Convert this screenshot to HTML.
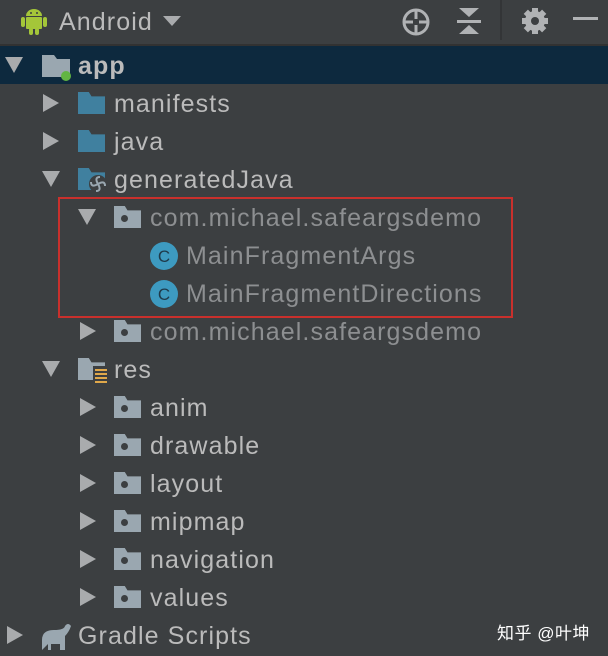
<!DOCTYPE html>
<html><head><style>
body{margin:0;width:608px;height:656px;background:#3c3f41;overflow:hidden;font-family:"Liberation Sans","Noto Sans CJK SC",sans-serif;position:relative}
.a{position:absolute}
.t{position:absolute;font-size:25px;letter-spacing:1.1px;color:#bbbbbb;line-height:38px;height:38px;white-space:nowrap;margin-top:1px}
.g{color:#8d8f91}
.tri{position:absolute;width:0;height:0}
.r{border-top:9px solid transparent;border-bottom:9px solid transparent;border-left:16px solid #a9abad}
.d{border-left:9px solid transparent;border-right:9px solid transparent;border-top:16px solid #a9abad}
.f{position:absolute;width:27px;height:22px}
</style></head><body>
<div class="a" style="left:0;top:0;width:608px;height:44px;background:#3c3f41;border-bottom:2px solid #323232"></div>
<svg class="a" style="left:20px;top:6px" width="28" height="30" viewBox="0 0 28 30"><path d="M6 10a8 7 0 0 1 16 0z" fill="#a4c639"/><rect x="6" y="11" width="16" height="12" rx="1" fill="#a4c639"/><rect x="1" y="11" width="4" height="10" rx="2" fill="#a4c639"/><rect x="23" y="11" width="4" height="10" rx="2" fill="#a4c639"/><rect x="9" y="22" width="4" height="7" rx="2" fill="#a4c639"/><rect x="15" y="22" width="4" height="7" rx="2" fill="#a4c639"/><circle cx="11" cy="7" r="1" fill="#3c3f41"/><circle cx="17" cy="7" r="1" fill="#3c3f41"/></svg>
<div class="t" style="left:59px;top:2px">Android</div>
<div class="tri d" style="left:163px;top:16px;border-left-width:9px;border-right-width:9px;border-top-width:10px"></div>
<svg class="a" style="left:400px;top:6px" width="32" height="32"><circle cx="16" cy="16" r="12" fill="none" stroke="#b0b2b4" stroke-width="3"/><path d="M16 3v10M16 19v10M3 16h10M19 16h10" stroke="#b0b2b4" stroke-width="3"/></svg>
<svg class="a" style="left:455px;top:6px" width="28" height="30"><path d="M4 2h20l-10 9z M4 28h20l-10-9z" fill="#b0b2b4"/><rect x="2" y="14" width="24" height="3" fill="#b0b2b4"/></svg>
<div class="a" style="left:500px;top:0;width:2px;height:40px;background:#333537"></div>
<svg class="a" style="left:520px;top:6px" width="30" height="30" viewBox="0 0 30 30"><g fill="#b0b2b4"><circle cx="15" cy="15" r="10"/><rect x="12" y="2" width="6" height="26"/><rect x="2" y="12" width="26" height="6"/><rect x="12" y="2" width="6" height="26" transform="rotate(45 15 15)"/><rect x="12" y="2" width="6" height="26" transform="rotate(-45 15 15)"/></g><circle cx="15" cy="15" r="4" fill="#3c3f41"/></svg>
<div class="a" style="left:573px;top:17px;width:25px;height:3px;background:#b0b2b4"></div>

<div class="a" style="left:0;top:46px;width:608px;height:38px;background:#0d293e"></div>
<div class="tri d" style="left:5px;top:57px"></div>
<svg class="a" style="left:42px;top:53px" width="30" height="28"><path d="M0 2h12l3 4h13v18H0z" fill="#9aa7b0"/><circle cx="24" cy="23" r="5" fill="#62b543"/></svg>
<div class="t" style="left:78px;top:46px;font-weight:bold">app</div>

<div class="tri r" style="left:43px;top:94px"></div>
<div class="f" style="left:78px;top:92px;background:#40809f;clip-path:polygon(0 0,40% 0,50% 20%,100% 20%,100% 100%,0 100%)"></div>
<div class="t" style="left:114px;top:84px">manifests</div>
<div class="tri r" style="left:43px;top:132px"></div>
<div class="f" style="left:78px;top:130px;background:#40809f;clip-path:polygon(0 0,40% 0,50% 20%,100% 20%,100% 100%,0 100%)"></div>
<div class="t" style="left:114px;top:122px">java</div>
<div class="tri d" style="left:42px;top:171px"></div>
<div class="f" style="left:78px;top:168px;background:#40809f;clip-path:polygon(0 0,40% 0,50% 20%,100% 20%,100% 100%,0 100%)"></div>
<svg class="a" style="left:88px;top:174px" width="20" height="20"><circle cx="10" cy="10" r="9" fill="#3c3f41"/><g stroke="#9aa7b0" stroke-width="2" fill="none"><path d="M10 10Q6 3 12 3M10 10Q17 6 17 12M10 10Q14 17 8 17M10 10Q3 14 3 8"/></g></svg>
<div class="t" style="left:114px;top:160px">generatedJava</div>

<div class="a" style="left:58px;top:197px;width:451px;height:117px;border:2px solid #c9302c"></div>
<div class="tri d" style="left:78px;top:209px"></div>
<div class="f" style="left:114px;top:206px;background:#9aa7b0;clip-path:polygon(0 0,40% 0,50% 20%,100% 20%,100% 100%,0 100%)"></div><div class="a" style="left:121px;top:215px;width:7px;height:7px;border-radius:50%;background:#3c3f41"></div>
<div class="t g" style="left:150px;top:198px">com.michael.safeargsdemo</div>
<svg class="a" style="left:150px;top:242px" width="28" height="28"><circle cx="14" cy="14" r="14" fill="#3d9ac0"/><text x="14" y="20" font-size="17" text-anchor="middle" fill="#1f3a4a" font-family="Liberation Sans">C</text></svg>
<div class="t g" style="left:186px;top:236px">MainFragmentArgs</div>
<svg class="a" style="left:150px;top:280px" width="28" height="28"><circle cx="14" cy="14" r="14" fill="#3d9ac0"/><text x="14" y="20" font-size="17" text-anchor="middle" fill="#1f3a4a" font-family="Liberation Sans">C</text></svg>
<div class="t g" style="left:186px;top:274px">MainFragmentDirections</div>

<div class="tri r" style="left:80px;top:322px"></div>
<div class="f" style="left:114px;top:320px;background:#9aa7b0;clip-path:polygon(0 0,40% 0,50% 20%,100% 20%,100% 100%,0 100%)"></div><div class="a" style="left:121px;top:329px;width:7px;height:7px;border-radius:50%;background:#3c3f41"></div>
<div class="t g" style="left:150px;top:312px">com.michael.safeargsdemo</div>

<div class="tri d" style="left:42px;top:361px"></div>
<div class="f" style="left:78px;top:358px;background:#9aa7b0;clip-path:polygon(0 0,40% 0,50% 20%,100% 20%,100% 100%,0 100%)"></div>
<svg class="a" style="left:93px;top:366px" width="16" height="20"><rect width="16" height="20" fill="#3c3f41"/><g fill="#e0a84a"><rect x="2" y="3" width="12" height="2"/><rect x="2" y="7" width="12" height="2"/><rect x="2" y="11" width="12" height="2"/><rect x="2" y="15" width="12" height="2"/></g></svg>
<div class="t" style="left:114px;top:350px">res</div>

<div class="tri r" style="left:80px;top:398px"></div><div class="f" style="left:114px;top:396px;background:#9aa7b0;clip-path:polygon(0 0,40% 0,50% 20%,100% 20%,100% 100%,0 100%)"></div><div class="a" style="left:121px;top:405px;width:7px;height:7px;border-radius:50%;background:#3c3f41"></div><div class="t" style="left:150px;top:388px">anim</div>
<div class="tri r" style="left:80px;top:436px"></div><div class="f" style="left:114px;top:434px;background:#9aa7b0;clip-path:polygon(0 0,40% 0,50% 20%,100% 20%,100% 100%,0 100%)"></div><div class="a" style="left:121px;top:443px;width:7px;height:7px;border-radius:50%;background:#3c3f41"></div><div class="t" style="left:150px;top:426px">drawable</div>
<div class="tri r" style="left:80px;top:474px"></div><div class="f" style="left:114px;top:472px;background:#9aa7b0;clip-path:polygon(0 0,40% 0,50% 20%,100% 20%,100% 100%,0 100%)"></div><div class="a" style="left:121px;top:481px;width:7px;height:7px;border-radius:50%;background:#3c3f41"></div><div class="t" style="left:150px;top:464px">layout</div>
<div class="tri r" style="left:80px;top:512px"></div><div class="f" style="left:114px;top:510px;background:#9aa7b0;clip-path:polygon(0 0,40% 0,50% 20%,100% 20%,100% 100%,0 100%)"></div><div class="a" style="left:121px;top:519px;width:7px;height:7px;border-radius:50%;background:#3c3f41"></div><div class="t" style="left:150px;top:502px">mipmap</div>
<div class="tri r" style="left:80px;top:550px"></div><div class="f" style="left:114px;top:548px;background:#9aa7b0;clip-path:polygon(0 0,40% 0,50% 20%,100% 20%,100% 100%,0 100%)"></div><div class="a" style="left:121px;top:557px;width:7px;height:7px;border-radius:50%;background:#3c3f41"></div><div class="t" style="left:150px;top:540px">navigation</div>
<div class="tri r" style="left:80px;top:588px"></div><div class="f" style="left:114px;top:586px;background:#9aa7b0;clip-path:polygon(0 0,40% 0,50% 20%,100% 20%,100% 100%,0 100%)"></div><div class="a" style="left:121px;top:595px;width:7px;height:7px;border-radius:50%;background:#3c3f41"></div><div class="t" style="left:150px;top:578px">values</div>

<div class="tri r" style="left:7px;top:626px"></div>
<svg class="a" style="left:40px;top:622px" width="32" height="28"><path d="M2 28V18Q2 8 14 8Q24 8 25 4Q28 0 31 4Q29 10 25 14V28h-5v-6h-9v6H8v-6z" fill="#9aa7b0"/></svg>
<div class="t" style="left:78px;top:616px">Gradle Scripts</div>
<div class="a" style="left:497px;top:619px;font-size:17px;letter-spacing:0.5px;color:#fff;white-space:nowrap">知乎 @叶坤</div>
</body></html>
